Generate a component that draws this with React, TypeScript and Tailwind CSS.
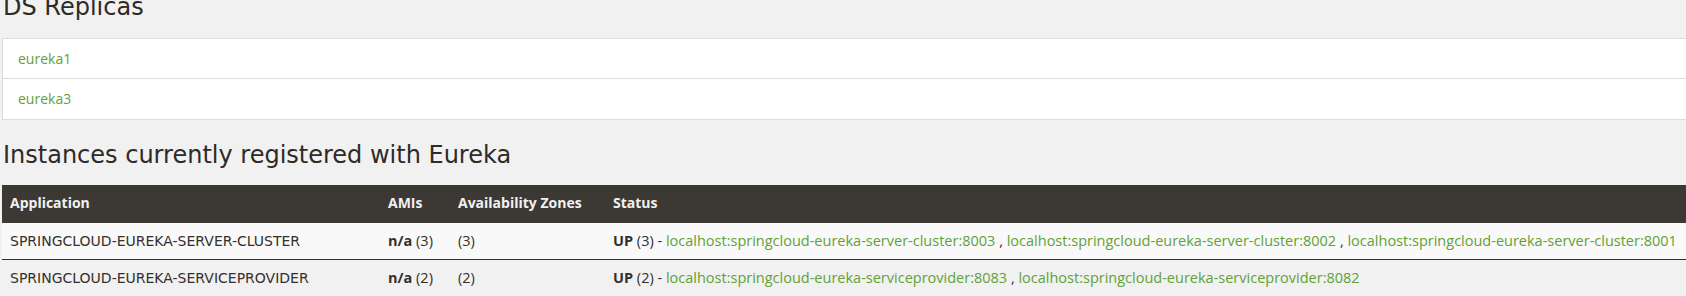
import type React from "react"

const replicas = ["eureka1", "eureka3"]

const apps = [
  {
    name: "SPRINGCLOUD-EUREKA-SERVER-CLUSTER",
    count: 3,
    instances: [
      "localhost:springcloud-eureka-server-cluster:8003",
      "localhost:springcloud-eureka-server-cluster:8002",
      "localhost:springcloud-eureka-server-cluster:8001",
    ],
  },
  {
    name: "SPRINGCLOUD-EUREKA-SERVICEPROVIDER",
    count: 2,
    instances: [
      "localhost:springcloud-eureka-serviceprovider:8083",
      "localhost:springcloud-eureka-serviceprovider:8082",
    ],
  },
]

const App: React.FC = () => {
  return (
    <div className="h-screen w-screen overflow-hidden bg-[#f1f1f1] font-['Open_Sans',sans-serif] text-[14px] leading-5 text-[#34302d]">
      <div className="flex w-[1700px] flex-col pl-[2px]">
        <h2 className="mt-[-6px] mb-[18px] pl-[1px] font-['DejaVu_Sans',sans-serif] text-[24px] leading-[26px] text-[#2e2a27]">
          DS Replicas
        </h2>

        <ul className="border border-[#dddddd] bg-white">
          {replicas.map((r, i) => (
            <li
              key={r}
              className={`h-[40px] px-[15px] py-[10px] ${i < replicas.length - 1 ? "border-b border-[#dddddd]" : ""}`}
            >
              <a href="#" className="text-[#62a137]">
                {r}
              </a>
            </li>
          ))}
        </ul>

        <h2 className="mt-[22px] mb-[17px] pl-[1px] font-['DejaVu_Sans',sans-serif] text-[24px] leading-[26px] text-[#2e2a27]">
          Instances currently registered with Eureka
        </h2>

        <table className="w-full table-fixed border-collapse">
          <colgroup>
            <col className="w-[378px]" />
            <col className="w-[70px]" />
            <col className="w-[155px]" />
            <col />
          </colgroup>
          <thead>
            <tr className="bg-[#3c3834] text-left text-[#f1f1f1]">
              <th className="border-b-2 border-[#3c3834] px-2 py-2 font-bold">Application</th>
              <th className="border-b-2 border-[#3c3834] px-2 py-2 font-bold">AMIs</th>
              <th className="border-b-2 border-[#3c3834] px-2 py-2 font-bold">Availability Zones</th>
              <th className="border-b-2 border-[#3c3834] px-2 py-2 font-bold">Status</th>
            </tr>
          </thead>
          <tbody>
            {apps.map((app, i) => (
              <tr
                key={app.name}
                className={i === 0 ? "border-b border-[#34302d] bg-[#f9f9f9]" : ""}
              >
                <td className="px-2 py-2 font-['DejaVu_Sans',sans-serif] whitespace-nowrap">{app.name}</td>
                <td className="px-2 py-2 text-[14.5px] whitespace-nowrap">
                  <b>n/a</b> ({app.count})
                </td>
                <td className="px-2 py-2 text-[14.5px]">({app.count})</td>
                <td className="px-2 py-2 text-[14.5px] whitespace-nowrap">
                  <b>UP</b> ({app.count}) -{" "}
                  {app.instances.map((inst, j) => (
                    <span key={inst}>
                      {j > 0 && " , "}
                      <a href="#" className="text-[#62a137]">
                        {inst}
                      </a>
                    </span>
                  ))}
                </td>
              </tr>
            ))}
          </tbody>
        </table>
      </div>
    </div>
  )
}

export default App
